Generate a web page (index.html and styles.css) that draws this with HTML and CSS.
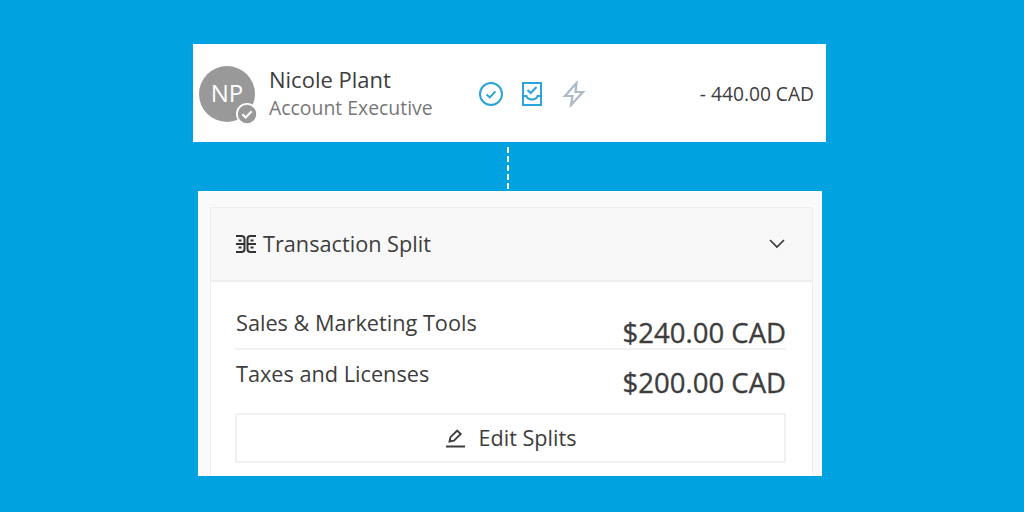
FILE: index.html
```html
<!DOCTYPE html>
<html lang="en">
<head>
<meta charset="utf-8">
<title>Transaction Split</title>
<link rel="stylesheet" href="styles.css">
</head>
<body>
<main class="stage">
  <section class="person">
    <div class="avatar"><span class="initials">NP</span>
      <span class="badge">
        <svg viewBox="0 0 20 20" width="20" height="20"><circle cx="10" cy="10" r="9.2" fill="#999" stroke="#fff" stroke-width="1.6"/><path d="M5.8 10.2l3 3 5.4-5.6" fill="none" stroke="#fff" stroke-width="2"/></svg>
      </span>
    </div>
    <div class="who">
      <div class="name">Nicole Plant</div>
      <div class="role">Account Executive</div>
    </div>
    <div class="icons">
      <svg viewBox="0 0 26 26" width="26" height="26"><circle cx="13" cy="13" r="11" fill="none" stroke="#2ba3dd" stroke-width="2"/><path d="M8.600 13.400l3.200 3 5.600-6" fill="none" stroke="#2ba3dd" stroke-width="2"/></svg>
      <svg class="tray" viewBox="0 0 22 26" width="22" height="26"><path d="M2 2h18v22H2z" fill="none" stroke="#2ba3dd" stroke-width="2"/><path d="M6.500 9l3.200 3 5.800-6" fill="none" stroke="#2ba3dd" stroke-width="2"/><path d="M2 15h3.500c1 4.500 10 4.500 11 0H20" fill="none" stroke="#2ba3dd" stroke-width="2"/></svg>
      <svg viewBox="0 0 24 26" width="24" height="26"><path d="M14.500 2L3 15h7.500L9 24l12-13h-7.500z" fill="none" stroke="#adb9c7" stroke-width="2.200"/></svg>
    </div>
    <div class="amount">- 440.00 CAD</div>
  </section>
  <div class="connector"></div>
  <section class="sheet">
    <div class="panel">
      <header class="panel-head">
        <div class="title">
          <svg viewBox="0 0 22 20" width="22" height="20"><path d="M1 2h5.500a3 3 0 0 1 3 3v10a3 3 0 0 1-3 3H1M1 10h8.500M21 2h-5.500a3 3 0 0 0-3 3v10a3 3 0 0 0 3 3H21M12.500 10H21M3.500 6.500h3M3.500 13.500h3M18.500 6.500h-3M18.500 13.500h-3" fill="none" stroke="#333" stroke-width="2"/></svg>
          <span>Transaction Split</span>
        </div>
        <svg class="chev" viewBox="0 0 16 10" width="16" height="10"><path d="M1 1l7 7 7-7" fill="none" stroke="#3a3a3a" stroke-width="1.700"/></svg>
      </header>
      <div class="panel-body">
        <div class="row row-first">
          <span class="label">Sales &amp; Marketing Tools</span>
          <span class="value">$240.00 CAD</span>
        </div>
        <div class="row">
          <span class="label">Taxes and Licenses</span>
          <span class="value value-next">$200.00 CAD</span>
        </div>
        <div class="edit">
          <svg viewBox="0 0 21 20" width="21" height="20"><path d="M4.500 13.500l1-4.300 6.700-6.700 3.500 3.500-6.700 6.700zM1 18.500h19" fill="none" stroke="#3d3d3d" stroke-width="1.900"/></svg>
          <span>Edit Splits</span>
        </div>
      </div>
    </div>
  </section>
</main>
</body>
</html>
```
FILE: styles.css
```css
* { box-sizing: border-box; }
html, body { margin: 0; height: 100%; }
body {
  background: #00a3e0;
  font-family: "Open Sans", "Liberation Sans", sans-serif;
  color: #3d3d3d;
  overflow: hidden;
}
.stage {
  width: 1024px;
  height: 512px;
  padding-top: 44px;
  display: flex;
  flex-direction: column;
}
.person {
  width: 633px;
  height: 98px;
  margin-left: 193px;
  background: #fff;
  display: flex;
  align-items: center;
  padding: 2px 12px 0 6px;
}
.avatar {
  position: relative;
  width: 56px;
  height: 56px;
  border-radius: 50%;
  background: #999;
  color: #fff;
  font-size: 24px;
  display: flex;
  align-items: center;
  justify-content: center;
  flex: none;
}
.initials { margin-top: -3px; }
.badge {
  position: absolute;
  right: -3px;
  bottom: -3px;
  width: 22px;
  height: 22px;
  display: flex;
}
.badge svg { width: 22px; height: 22px; }
.who { margin-left: 14px; width: 196px; margin-top: -2px; }
.name { font-size: 22px; line-height: 27px; color: #3d3d3d; }
.role { font-size: 19.400px; line-height: 27px; color: #777; margin-top: 1px; }
.icons { display: flex; align-items: center; gap: 18px; margin-left: 13px; }
.tray { margin-left: -1px; margin-right: 1px; }
.amount { margin-left: auto; font-size: 19.200px; color: #3d3d3d; margin-top: -2px; }
.connector {
  width: 0;
  height: 42px;
  margin: 5px 0 2px 507px;
  border-left: 2px dashed #fff;
}
.sheet {
  width: 624px;
  height: 285px;
  margin-left: 198px;
  background: #fafafa;
  padding: 16px 9px 0 12px;
}
.panel {
  height: 100%;
  border: solid #eee;
  border-width: 1px 1px 0;
  background: #fff;
}
.panel-head {
  height: 74px;
  background: #f8f8f8;
  border-bottom: 2px solid #eee;
  display: flex;
  align-items: center;
  justify-content: space-between;
  padding: 0 27px 0 24px;
}
.title { display: flex; align-items: center; gap: 6px; font-size: 21.700px; }
.title span { margin-top: -2px; }
.panel-body { padding: 0 26px 0 24px; }
.row {
  height: 50px;
  display: flex;
  justify-content: space-between;
  position: relative;
}
.row-first { margin-top: 19px; height: 49px; border-bottom: 2px solid #f0f0f0; }
.label { font-size: 21.700px; line-height: 30px; margin: 9px 0 0 1px; color: #3d3d3d; }
.row-first .label { margin-top: 7px; }
.value { font-size: 27.500px; line-height: 32px; font-weight: 500; -webkit-text-stroke: 0.35px #3d3d3d; margin-top: 16px; color: #3d3d3d; }
.value-next { margin-top: 17px; }
.edit {
  height: 50px;
  margin-top: 13px;
  border: 2px solid #f0f0f0;
  border-radius: 2px;
  display: flex;
  align-items: center;
  justify-content: center;
  gap: 13px;
  font-size: 21.600px;
}
.edit span { margin-top: -1px; }
```
